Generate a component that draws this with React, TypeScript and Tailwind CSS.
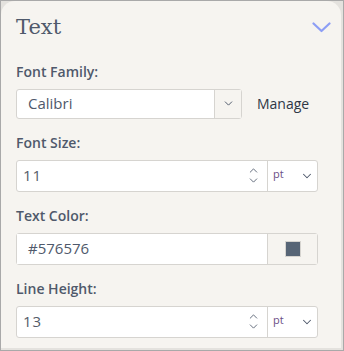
import { ChevronDown, ChevronUp } from 'lucide-react'

const sans = { fontFamily: '"Open Sans", "Liberation Sans", sans-serif' }

function Label({ children }: { children: string }) {
  return <div className="mb-[8px] text-[14px] leading-[19px] font-semibold text-[#4f596b]" style={sans}>{children}</div>
}

function Spinner() {
  return (
    <div className="flex flex-col items-center justify-center pr-[7px] text-[#4f596b]">
      <ChevronUp size={13} strokeWidth={1.6} className="-mb-[3px]" />
      <ChevronDown size={13} strokeWidth={1.6} />
    </div>
  )
}

function UnitBox() {
  return (
    <div className="flex w-[50px] items-center justify-between border-l border-[#d6d4d0] pl-[5px] pr-[3px]">
      <span className="-mt-[3px] text-[11px] text-[#6b4f86]" style={sans}>pt</span>
      <ChevronDown size={14} strokeWidth={1.8} className="text-[#4f596b]" />
    </div>
  )
}

function NumberField({ value }: { value: string }) {
  return (
    <div className="flex h-[32px] w-[302px] rounded-[3px] border border-[#d6d4d0] bg-white">
      <div className="flex flex-1 items-center pl-[6px] text-[15px] tracking-[1px] text-[#555c68]" style={sans}>{value}</div>
      <Spinner />
      <UnitBox />
    </div>
  )
}

export default function App() {
  return (
    <div className="h-[351px] w-[344px] border border-[#a9a9a9] bg-[#e4e2de] pr-[2px] pb-[2px]">
      <div className="h-full rounded-t-[14px] bg-[#f6f4f0] px-[15px] pt-[11px]">
        <div className="flex items-center justify-between">
          <span className="text-[21px] text-[#4f596b]" style={{ fontFamily: '"DejaVu Serif", "Liberation Serif", serif' }}>Text</span>
          <svg width="19" height="11" viewBox="0 0 19 11" className="mr-[-5px]">
            <polyline points="1.5,1.5 9.5,9 17.5,1.5" fill="none" stroke="#8d9ef5" strokeWidth="2.2" strokeLinecap="round" strokeLinejoin="round" />
          </svg>
        </div>

        <div className="mt-[18px]">
          <Label>Font Family:</Label>
          <div className="flex items-center">
            <div className="flex h-[30px] w-[226px] rounded-[3px] border border-[#d6d4d0] bg-white">
              <div className="flex flex-1 items-center pl-[11px] text-[15px] text-[#4f596b]" style={sans}>Calibri</div>
              <div className="flex w-[27px] items-center justify-center border-l border-[#d6d4d0] bg-[#f6f4f0]">
                <ChevronDown size={13} strokeWidth={1.8} className="text-[#4f596b]" />
              </div>
            </div>
            <span className="ml-[15px] text-[14px] font-medium text-[#2f3745]" style={sans}>Manage</span>
          </div>
        </div>

        <div className="mt-[14px]">
          <Label>Font Size:</Label>
          <NumberField value="11" />
        </div>

        <div className="mt-[14px]">
          <Label>Text Color:</Label>
          <div className="flex h-[32px] w-[302px] rounded-[3px] border border-[#d6d4d0]">
            <div className="flex flex-1 items-center bg-white pl-[11px] text-[15px] text-[#4f596b]" style={sans}>#576576</div>
            <div className="flex w-[50px] items-center justify-center border-l border-[#d6d4d0] bg-[#f6f4f0]">
              <div className="h-[16px] w-[16px] border border-[#d6d4d0] bg-[#576576]" />
            </div>
          </div>
        </div>

        <div className="mt-[14px]">
          <Label>Line Height:</Label>
          <NumberField value="13" />
        </div>
      </div>
    </div>
  )
}
